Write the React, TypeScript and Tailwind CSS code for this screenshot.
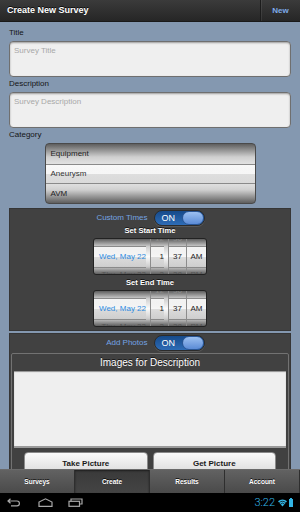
import React from 'react';

const wheelBg =
  'bg-[linear-gradient(#5e5e5e,#cfcfcf_22%,#fbfbfb_50%,#cfcfcf_78%,#5e5e5e)]';
const bandBg =
  'bg-[linear-gradient(rgba(255,255,255,0.75),rgba(240,240,240,0.5)_50%,rgba(170,170,170,0.35)_52%,rgba(210,210,210,0.45))]';

function Toggle() {
  return (
    <div className="flex h-[16px] w-[51px] shrink-0 items-center overflow-hidden rounded-full border border-[#2b2b2b] bg-[linear-gradient(#164a8a,#2e6cb6)] shadow-[0_1px_0_rgba(255,255,255,0.12)]">
      <span className="w-[29px] text-center text-[9px] leading-none text-white">ON</span>
      <span className="ml-auto h-[14px] w-[23px] rounded-full border border-[#2a5593] bg-[linear-gradient(#9cc0f0,#5b8bd6)]" />
    </div>
  );
}

type Col = { w: string; align: string; top: string; mid: string; bot: string; blue?: boolean };

const timeCols: Col[] = [
  { w: 'w-[56px]', align: 'text-right pr-[4px]', top: '', mid: 'Wed, May 22', bot: 'Thu, May 23', blue: true },
  { w: 'w-[18px]', align: 'text-right pr-[4px]', top: '12', mid: '1', bot: '2' },
  { w: 'w-[18px]', align: 'text-center', top: '36', mid: '37', bot: '38' },
  { w: 'flex-1', align: 'text-center', top: '', mid: 'AM', bot: 'PM' },
];

function TimeWheel() {
  return (
    <div className={`flex h-[37px] w-[114px] overflow-hidden rounded-[3px] border border-[#222] ${wheelBg}`}>
      {timeCols.map((c, i) => (
        <div
          key={i}
          className={`flex h-full flex-col justify-center whitespace-nowrap text-[8px] ${c.w} ${c.align} ${i > 0 ? 'border-l border-[#8c8c8c]' : ''}`}
        >
          <div className="h-[14px] shrink-0 leading-[14px] text-[#8a8a8a]">{c.top}</div>
          <div
            className={`h-[22px] shrink-0 border-y border-[#8a8a8a] leading-[20px] ${bandBg} ${c.blue ? 'text-[#2c8be0]' : 'text-[#1e1e1e]'}`}
          >
            {c.mid}
          </div>
          <div className="h-[14px] shrink-0 leading-[14px] text-[#555]">{c.bot}</div>
        </div>
      ))}
    </div>
  );
}

function CategoryWheel() {
  return (
    <div className={`mx-auto mt-[3px] flex h-[61px] w-[211px] flex-col overflow-hidden rounded-[4px] border border-[#4a4a4a] text-[8px] ${wheelBg}`}>
      <div className="h-[20px] shrink-0 pl-[5px] leading-[20px] text-[#1e1e1e]">Equipment</div>
      <div className={`h-[20px] shrink-0 border-y border-[#8a8a8a] pl-[5px] leading-[18px] text-[#333] ${bandBg}`}>Aneurysm</div>
      <div className="h-[19px] shrink-0 pl-[5px] leading-[19px] text-[#1e1e1e]">AVM</div>
    </div>
  );
}

function Field({ label, placeholder, first }: { label: string; placeholder: string; first?: boolean }) {
  return (
    <>
      <div className={`${first ? 'pt-[6px]' : 'pt-[2px]'} text-[8px] leading-[10px] text-[#151515]`}>{label}</div>
      <div className="mt-[3px] h-[36px] rounded-[4px] border border-[#6f6f6f] bg-[#efefef] px-[4px] pt-[3px] text-[8px] text-[#a8a8a8] shadow-[inset_0_1px_2px_rgba(0,0,0,0.35)]">
        {placeholder}
      </div>
    </>
  );
}

const tabs = ['Surveys', 'Create', 'Results', 'Account'];

export default function App() {
  return (
    <div className="flex h-[512px] w-[300px] flex-col overflow-hidden bg-[#8498b0] font-['Liberation_Sans',Arial,sans-serif]">
      {/* Header */}
      <div className="flex h-[22px] shrink-0 items-stretch border-b border-[#1a1a1a] bg-[linear-gradient(#3b3b3b,#262626)]">
        <div className="flex flex-1 items-center pl-[7px] text-[9px] font-bold text-white [text-shadow:0_-1px_0_rgba(0,0,0,0.8)]">
          Create New Survey
        </div>
        <div className="flex w-[40px] items-center justify-center border-l border-[#1c1c1c] shadow-[inset_1px_0_0_rgba(255,255,255,0.08)] text-[8px] font-bold text-[#7eaaea]">
          New
        </div>
      </div>

      {/* Body */}
      <div className="min-h-0 flex-1 overflow-hidden px-[9px]">
        <Field label="Title" placeholder="Survey Title" first />
        <Field label="Description" placeholder="Survey Description" />
        <div className="pt-[2px] text-[8px] leading-[10px] text-[#151515]">Category</div>
        <CategoryWheel />

        {/* Times panel */}
        <div className="mt-[4px] flex h-[123px] flex-col items-center border border-[#363636] bg-[#414141]">
          <div className="flex items-center gap-[6px] pt-[1px]">
            <span className="w-[52px] whitespace-nowrap text-right text-[8px] text-[#74a3e3]">Custom Times</span>
            <Toggle />
          </div>
          <div className="h-[10px] whitespace-nowrap text-[7.6px] font-bold leading-[10px] text-white [text-shadow:0_-1px_0_rgba(0,0,0,0.7)]">Set Start Time</div>
          <div className="mt-[2px]">
            <TimeWheel />
          </div>
          <div className="mt-[3px] h-[10px] whitespace-nowrap text-[7.6px] font-bold leading-[10px] text-white [text-shadow:0_-1px_0_rgba(0,0,0,0.7)]">Set End Time</div>
          <div className="mt-[2px]">
            <TimeWheel />
          </div>
        </div>

        {/* Photos panel */}
        <div className="mt-[2px] flex h-[160px] flex-col border border-[#363636] bg-[#414141]">
          <div className="flex items-center justify-center gap-[6px] pt-[1px]">
            <span className="w-[52px] whitespace-nowrap text-right text-[8px] text-[#74a3e3]">Add Photos</span>
            <Toggle />
          </div>
          <div className="mx-[1px] mt-[2px] flex flex-1 flex-col rounded-[2px] border border-[#727272]">
            <div className="h-[17px] shrink-0 text-center text-[10px] leading-[17px] text-white [text-shadow:0_-1px_0_rgba(0,0,0,0.7)]">
              Images for Description
            </div>
            <div className="mx-[2px] h-[77px] shrink-0 border-b-2 border-[#9a9a9a] bg-[#efefef] shadow-[inset_0_1px_1px_rgba(0,0,0,0.4)]" />
            <div className="mt-[4px] flex shrink-0 gap-[5px] px-[12px]">
              <div className="h-[22px] flex-1 rounded-[4px] border border-[#8a8a8a] bg-[linear-gradient(#fafafa,#dcdcdc)] pt-[6px] text-center text-[8px] font-bold leading-[10px] text-[#1a1a1a]">
                Take Picture
              </div>
              <div className="h-[22px] flex-1 rounded-[4px] border border-[#8a8a8a] bg-[linear-gradient(#fafafa,#dcdcdc)] pt-[6px] text-center text-[8px] font-bold leading-[10px] text-[#1a1a1a]">
                Get Picture
              </div>
            </div>
          </div>
        </div>
      </div>

      {/* Tab bar */}
      <div className="flex h-[24px] shrink-0 border-t border-[#6a6a6a] bg-[#222]">
        {tabs.map((t) => (
          <div
            key={t}
            className={`flex flex-1 items-center justify-center border-r border-[#2e2e2e] text-[6.5px] font-bold text-white [text-shadow:0_-1px_0_rgba(0,0,0,0.8)] ${
              t === 'Create'
                ? 'bg-[linear-gradient(#3a3a3a,#444)] shadow-[inset_0_1px_2px_rgba(0,0,0,0.5)]'
                : 'bg-[linear-gradient(#626262,#4a4a4a)]'
            }`}
          >
            {t}
          </div>
        ))}
      </div>

      {/* System bar */}
      <div className="flex h-[19px] shrink-0 items-center bg-black px-[7px]">
        <svg width="14" height="9" viewBox="0 0 14 9" fill="none" stroke="#a8a8a8" strokeWidth="1.2">
          <path d="M3.5 0.8 L1 3 L3.5 5.2 M1 3 H10 A2.4 2.4 0 0 1 10 7.8 H4" />
        </svg>
        <svg className="ml-[17px]" width="15" height="9" viewBox="0 0 15 9" fill="none" stroke="#a8a8a8" strokeWidth="1.2">
          <path d="M1 8.3 V4 L7.5 0.8 L14 4 V8.3 Z" />
        </svg>
        <svg className="ml-[15px]" width="15" height="9" viewBox="0 0 15 9" fill="none" stroke="#a8a8a8" strokeWidth="1.2">
          <rect x="1" y="3.3" width="10.5" height="5" />
          <path d="M3 3.3 V1 H14 V6 H11.5" />
        </svg>
        <span className="ml-auto font-['Roboto',sans-serif] text-[11px] font-light leading-none text-[#33b5e5]">3:22</span>
        <svg className="ml-[3px]" width="9" height="8" viewBox="0 0 9 8">
          <path d="M0 2.2 A6.5 6.5 0 0 1 9 2.2 L4.5 7.5 Z" fill="#33b5e5" />
          <path d="M1.3 3.6 A4.6 4.6 0 0 1 7.7 3.6 M2.6 5.1 A2.6 2.6 0 0 1 6.4 5.1" stroke="#000" strokeWidth="0.7" fill="none" />
        </svg>
        <svg className="ml-[2px]" width="4" height="9" viewBox="0 0 4 9">
          <rect x="1" y="0" width="2" height="1" fill="#33b5e5" />
          <rect x="0" y="1" width="4" height="8" fill="#33b5e5" />
        </svg>
      </div>
    </div>
  );
}
